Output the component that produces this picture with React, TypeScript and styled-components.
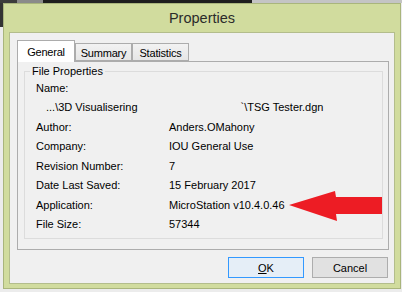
import React from 'react'
import styled, { createGlobalStyle } from 'styled-components'

const GlobalStyle = createGlobalStyle`
  html, body {
    margin: 0;
    padding: 0;
    background: #ececec;
  }
  body {
    font-family: 'Liberation Sans', Arial, sans-serif;
  }
`

const properties = [
  { label: 'Author:', value: 'Anders.OMahony' },
  { label: 'Company:', value: 'IOU General Use' },
  { label: 'Revision Number:', value: '7' },
  { label: 'Date Last Saved:', value: '15 February 2017' },
  { label: 'Application:', value: 'MicroStation v10.4.0.46' },
  { label: 'File Size:', value: '57344' },
]

const tabs = ['General', 'Summary', 'Statistics']

const App: React.FC = () => {
  return (
    <Screen>
      <GlobalStyle />
      <Window>
        <TitleBar>Properties</TitleBar>
        <Client>
          <TabStrip>
            {tabs.map((tab, index) => (
              <Tab key={tab} active={index === 0} width={index === 0 ? 58 : 57}>
                {tab}
              </Tab>
            ))}
          </TabStrip>
          <Panel>
            <GroupBox>
              <Legend>File Properties</Legend>
              <Grid>
                <Label>Name:</Label>
                <span />
                <PathRow>
                  <span>...\3D Visualisering</span>
                  <PathTail>`\TSG Tester.dgn</PathTail>
                </PathRow>
                {properties.map((p) => (
                  <React.Fragment key={p.label}>
                    <Label>{p.label}</Label>
                    <Value>{p.value}</Value>
                  </React.Fragment>
                ))}
              </Grid>
            </GroupBox>
          </Panel>
          <ButtonRow>
            <Button primary>
              <u>O</u>K
            </Button>
            <Button>Cancel</Button>
          </ButtonRow>
        </Client>
      </Window>
      <Arrow width="94" height="31" viewBox="0 0 94 31">
        <polygon points="0,14 46,0 47,6 93,6 93,23 47,23 48,30" fill="#ed1c24" />
      </Arrow>
    </Screen>
  )
}

const Screen = styled.div`
  position: relative;
  width: 402px;
  height: 292px;
  box-sizing: border-box;
  padding: 3px 1px 3px 3px;
  overflow: hidden;
  background:
    linear-gradient(to right, #3b3b3b 0 17px, #8a8a8a 17px 43px, #1e1e1e 43px 252px, #c4c4c4 252px) top / 100% 3px no-repeat,
    linear-gradient(#333333, #333333) 0 3px / 3px 24px no-repeat,
    #ececec;
`

const Window = styled.div`
  height: 100%;
  box-sizing: border-box;
  display: flex;
  flex-direction: column;
  background: #d1dc9e;
  border: 1px solid #a9b57c;
`

const TitleBar = styled.div`
  height: 28px;
  display: flex;
  align-items: center;
  justify-content: center;
  font-size: 14.5px;
  color: #2b2b2b;
`

const Client = styled.div`
  flex: 1;
  margin: 0 5px 4px 5px;
  display: flex;
  flex-direction: column;
  padding: 7px 5px 0 7px;
  background: #f0f0f0;
  border: 1px solid #b3bd8c;
`

const TabStrip = styled.div`
  height: 21px;
  display: flex;
  align-items: flex-end;
  position: relative;
  z-index: 1;
`

const Tab = styled.div<{ active?: boolean; width: number }>`
  box-sizing: border-box;
  width: ${(p) => p.width}px;
  height: ${(p) => (p.active ? 22 : 18)}px;
  margin-bottom: ${(p) => (p.active ? -1 : 0)}px;
  display: flex;
  align-items: center;
  justify-content: center;
  padding-top: ${(p) => (p.active ? 0 : 1)}px;
  font-size: 11px;
  letter-spacing: -0.2px;
  color: #000;
  background: ${(p) => (p.active ? '#ffffff' : 'linear-gradient(#f2f2f2, #e6e6e6)')};
  border: 1px solid #acacac;
  border-bottom: ${(p) => (p.active ? 'none' : '1px solid #acacac')};
`

const Panel = styled.div`
  height: 189px;
  box-sizing: border-box;
  border: 1px solid #acacac;
  background: #f0f0f0;
  padding: 3px 5px 0 6px;
`

const GroupBox = styled.fieldset`
  margin: 0;
  height: 174px;
  box-sizing: border-box;
  padding: 0 0 0 11px;
  border: 1px solid #dcdcdc;
`

const Legend = styled.legend`
  margin-left: -6px;
  padding: 0 2px;
  font-size: 11px;
  line-height: 13px;
  color: #000;
`

const Grid = styled.div`
  display: grid;
  grid-template-columns: 133px 1fr;
  grid-auto-rows: 19.5px;
  align-items: center;
  font-size: 11px;
  color: #000;
`

const Label = styled.span``

const Value = styled.span``

const PathRow = styled.div`
  grid-column: 1 / span 2;
  display: flex;
  padding-left: 10px;
`

const PathTail = styled.span`
  margin-left: 103px;
`

const ButtonRow = styled.div`
  display: flex;
  justify-content: flex-end;
  gap: 8px;
  margin-top: 7px;
  padding-right: 1px;
`

const Button = styled.div<{ primary?: boolean }>`
  box-sizing: border-box;
  width: 76px;
  height: 21px;
  display: flex;
  align-items: center;
  justify-content: center;
  font-size: 11px;
  color: #000;
  background: ${(p) => (p.primary ? '#e5eef7' : '#e1e1e1')};
  border: 1px solid ${(p) => (p.primary ? '#3399ff' : '#adadad')};

  u {
    text-decoration: underline;
  }
`

const Arrow = styled.svg`
  position: absolute;
  left: 289px;
  top: 191px;
`

export default App
